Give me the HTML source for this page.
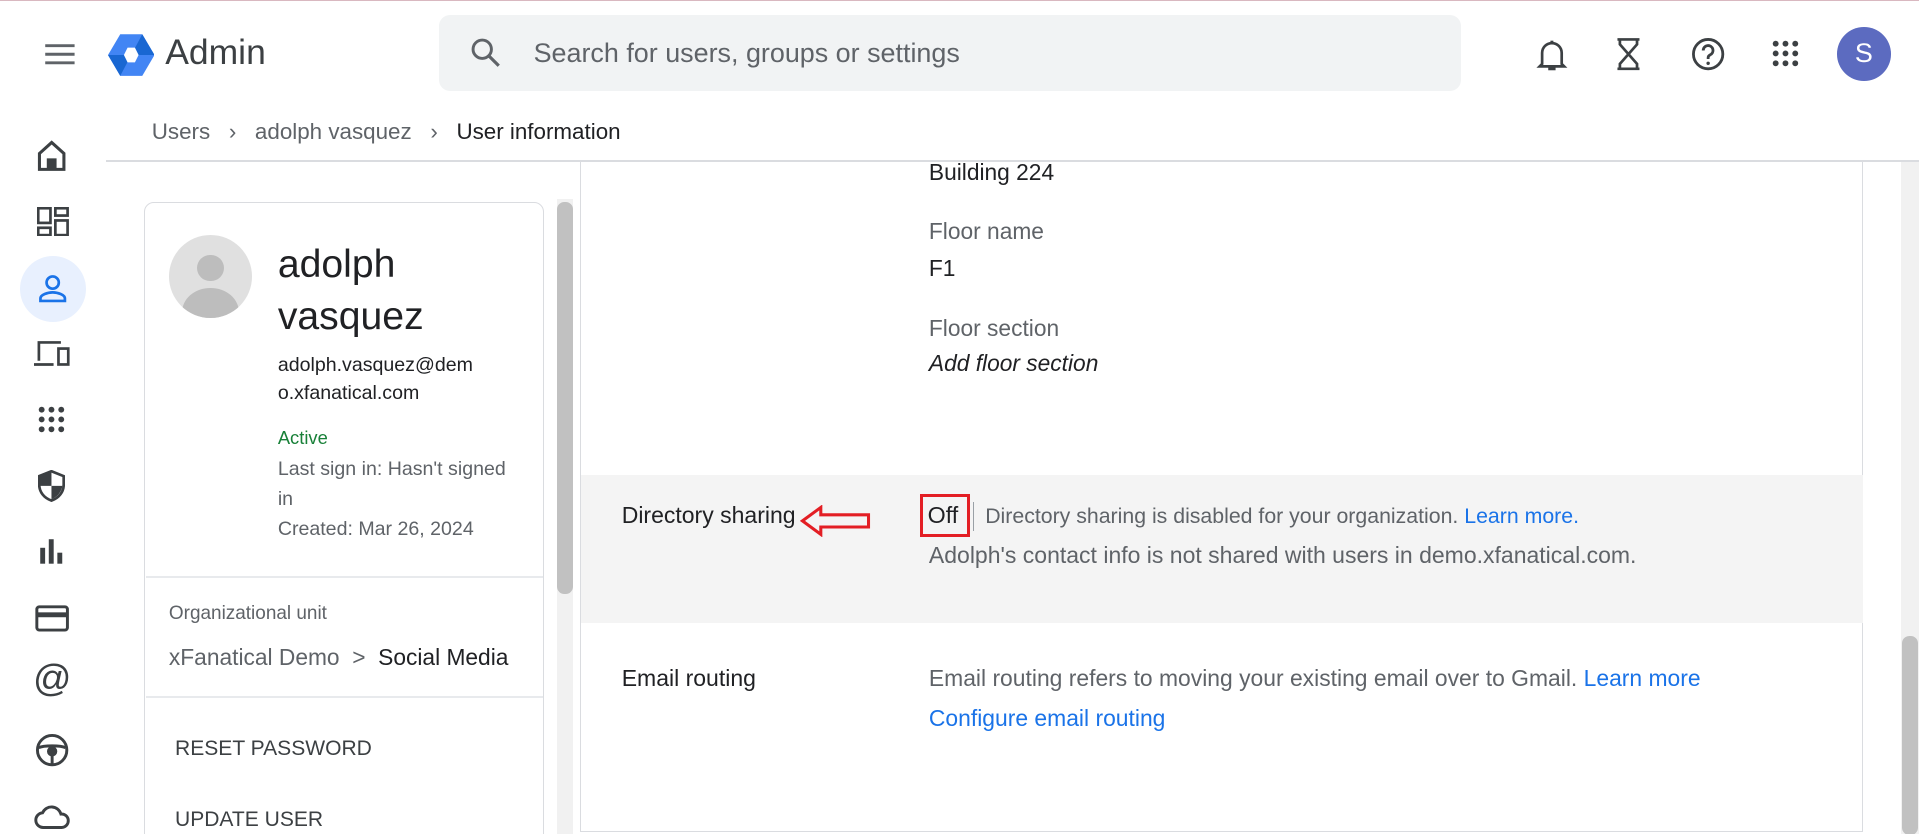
<!DOCTYPE html>
<html><head><style>
html,body{margin:0;padding:0;overflow:hidden;background:#fff}
body{width:1919px;height:834px}
#w{position:relative;width:1568px;height:682px;zoom:1.22385;font-family:"Liberation Sans",sans-serif;color:#202124}
.a{position:absolute;white-space:nowrap}
.g{color:#5f6368}
.b{color:#1a73e8}
svg{position:absolute}
</style></head><body><div id="w">
<div class="a" style="left:0;top:0;width:1568px;height:1px;background:#d9b8c0"></div>
<svg style="left:36px;top:34px" width="26" height="20" viewBox="0 0 26 20"><path d="M1 3h24M1 10h24M1 17h24" stroke="#5f6368" stroke-width="2.4"/></svg>
<svg style="left:88px;top:27px" width="38" height="36" viewBox="0 0 38 36"><path d="M10 1h18l10 17-10 17H10L0 18z" fill="#4285f4"/><path d="M19 18L28 1l10 17z" fill="#1967d2"/><path d="M19 18H0l10 17z" fill="#1967d2"/><path d="M13 18l3-6h6l3 6-3 6h-6z" fill="#fff"/></svg>
<div class="a" style="left:135px;top:26px;font-size:29px;color:#3c4043">Admin</div>
<div class="a" style="left:359px;top:12px;width:835px;height:62px;background:#f1f3f4;border-radius:9px"></div>
<svg style="left:384px;top:30px" width="26" height="26" viewBox="0 0 26 26"><circle cx="10" cy="10" r="7.5" fill="none" stroke="#5f6368" stroke-width="2.4"/><path d="M15.5 15.5l8 8" stroke="#5f6368" stroke-width="2.6"/></svg>
<div class="a g" style="left:436px;top:31px;font-size:22px">Search for users, groups or settings</div>
<svg style="left:1255px;top:30px" width="26" height="30" viewBox="0 0 26 30"><path d="M5 22V13a8 8 0 0 1 16 0v9l2 2H3z" fill="none" stroke="#3c4043" stroke-width="2.2"/><path d="M10 26h6" stroke="#3c4043" stroke-width="2.4"/><path d="M13 3v2" stroke="#3c4043" stroke-width="2.4"/></svg>
<svg style="left:1320px;top:30px" width="22" height="28" viewBox="0 0 22 28"><path d="M2 2h18M2 26h18M4 2v4l7 8-7 8v4M18 2v4l-7 8 7 8v4" fill="none" stroke="#3c4043" stroke-width="2.2"/></svg>
<svg style="left:1382px;top:30px" width="28" height="28" viewBox="0 0 28 28"><circle cx="14" cy="14" r="12" fill="none" stroke="#3c4043" stroke-width="2.3"/><path d="M10 11a4 4 0 1 1 5.5 3.7c-1 .5-1.5 1.2-1.5 2.3v1" fill="none" stroke="#3c4043" stroke-width="2.3"/><circle cx="14" cy="21.5" r="1.4" fill="#3c4043"/></svg>
<svg style="left:1448px;top:33px" width="22" height="22" viewBox="0 0 22 22" fill="#3c4043"><circle cx="3" cy="3" r="2.4"/><circle cx="11" cy="3" r="2.4"/><circle cx="19" cy="3" r="2.4"/><circle cx="3" cy="11" r="2.4"/><circle cx="11" cy="11" r="2.4"/><circle cx="19" cy="11" r="2.4"/><circle cx="3" cy="19" r="2.4"/><circle cx="11" cy="19" r="2.4"/><circle cx="19" cy="19" r="2.4"/></svg>
<div class="a" style="left:1501px;top:22px;width:44px;height:44px;border-radius:50%;background:#5c6bc0;color:#fff;font-size:22px;text-align:center;line-height:44px">S</div>
<div class="a g" style="left:124px;top:97px;font-size:18.3px">Users &nbsp;&nbsp;›&nbsp;&nbsp; adolph vasquez &nbsp;&nbsp;›&nbsp;&nbsp; <span style="color:#202124">User information</span></div>
<div class="a" style="left:87px;top:131px;width:1481px;height:1px;background:#dadce0"></div>
<svg style="left:30px;top:114px" width="24" height="26" viewBox="0 0 24 26"><path d="M2 11L12 2l10 9v13H2z" fill="none" stroke="#3c4043" stroke-width="2.5"/><rect x="8" y="15" width="8" height="9" fill="#3c4043"/></svg>
<svg style="left:30px;top:169px" width="26" height="24" viewBox="0 0 26 24" fill="none" stroke="#3c4043" stroke-width="2.2"><rect x="1" y="1" width="10" height="12"/><rect x="1" y="17" width="10" height="6"/><rect x="15" y="1" width="10" height="6"/><rect x="15" y="11" width="10" height="12"/></svg>
<div class="a" style="left:16px;top:209px;width:54px;height:54px;border-radius:50%;background:#e8f0fe"></div>
<svg style="left:31px;top:224px" width="24" height="24" viewBox="0 0 24 24" fill="none" stroke="#1a73e8" stroke-width="2.2"><circle cx="12" cy="7" r="5"/><path d="M2 22v-2c0-3 6-5 10-5s10 2 10 5v2z"/></svg>
<svg style="left:28px;top:278px" width="30" height="22" viewBox="0 0 30 22" fill="none" stroke="#3c4043" stroke-width="2.2"><path d="M4 17V2h18M0 20h16"/><rect x="20" y="7" width="8" height="13"/></svg>
<svg style="left:31px;top:332px" width="22" height="22" viewBox="0 0 22 22" fill="#3c4043"><circle cx="3" cy="3" r="2.4"/><circle cx="11" cy="3" r="2.4"/><circle cx="19" cy="3" r="2.4"/><circle cx="3" cy="11" r="2.4"/><circle cx="11" cy="11" r="2.4"/><circle cx="19" cy="11" r="2.4"/><circle cx="3" cy="19" r="2.4"/><circle cx="11" cy="19" r="2.4"/><circle cx="19" cy="19" r="2.4"/></svg>
<svg style="left:31px;top:384px" width="22" height="26" viewBox="0 0 22 26"><path d="M11 1L1 5v7c0 6 4 11 10 13 6-2 10-7 10-13V5z" fill="none" stroke="#3c4043" stroke-width="2.2"/><path d="M11 2v11H2v-1V5zM11 13h9c-1 5-4 9-9 11z" fill="#3c4043"/></svg>
<svg style="left:32px;top:440px" width="20" height="22" viewBox="0 0 20 22" fill="#3c4043"><rect x="1" y="8" width="4" height="13"/><rect x="8" y="1" width="4" height="20"/><rect x="15" y="12" width="4" height="9"/></svg>
<svg style="left:29px;top:494px" width="28" height="22" viewBox="0 0 28 22"><rect x="1.5" y="1.5" width="25" height="19" rx="2" fill="none" stroke="#3c4043" stroke-width="2.4"/><rect x="2" y="6" width="24" height="4" fill="#3c4043"/></svg>
<div class="a" style="left:27px;top:538px;font-size:31px;color:#3c4043">@</div>
<svg style="left:29px;top:599px" width="28" height="28" viewBox="0 0 28 28" fill="none" stroke="#3c4043" stroke-width="2.4"><circle cx="14" cy="14" r="12"/><path d="M3 12c4-2 18-2 22 0M14 17v9"/><circle cx="14" cy="15" r="3" fill="#3c4043"/></svg>
<svg style="left:28px;top:656px" width="30" height="22" viewBox="0 0 30 22"><path d="M8 20a6 6 0 0 1-1-12 8 8 0 0 1 15 1 5 5 0 0 1 1 11z" fill="none" stroke="#3c4043" stroke-width="2.4"/></svg>
<div class="a" style="left:118px;top:165px;width:325px;height:540px;border:1px solid #dadce0;border-radius:8px"></div>
<div class="a" style="left:138px;top:192px;width:68px;height:68px;border-radius:50%;background:#e0e0e0;overflow:hidden">
<div style="position:absolute;left:23px;top:16px;width:22px;height:22px;border-radius:50%;background:#bdbdbd"></div>
<div style="position:absolute;left:11px;top:43px;width:46px;height:40px;border-radius:50%;background:#bdbdbd"></div></div>
<div class="a" style="left:227px;top:195px;font-size:32px;line-height:43px">adolph<br>vasquez</div>
<div class="a" style="left:227px;top:287px;font-size:16px;line-height:23px">adolph.vasquez@dem<br>o.xfanatical.com</div>
<div class="a" style="left:227px;top:349px;font-size:15px;color:#188038">Active</div>
<div class="a g" style="left:227px;top:372px;font-size:16px;line-height:24.5px">Last sign in: Hasn't signed<br>in<br>Created: Mar 26, 2024</div>
<div class="a" style="left:119px;top:471px;width:325px;height:1px;background:#e8eaed"></div>
<div class="a g" style="left:138px;top:493px;font-size:15.5px">Organizational unit</div>
<div class="a g" style="left:138px;top:526px;font-size:18.6px">xFanatical Demo &nbsp;&gt;&nbsp; <span style="color:#202124">Social Media</span></div>
<div class="a" style="left:119px;top:569px;width:325px;height:1px;background:#e8eaed"></div>
<div class="a" style="left:143px;top:602px;font-size:17.2px;color:#3c4043">RESET PASSWORD</div>
<div class="a" style="left:143px;top:660px;font-size:17.2px;color:#3c4043">UPDATE USER</div>
<div class="a" style="left:455px;top:163px;width:13px;height:519px;background:#f1f1f1"></div>
<div class="a" style="left:455px;top:165px;width:13px;height:320px;background:#c1c1c1;border-radius:6px"></div>
<div class="a" style="left:474px;top:132px;width:1047px;height:547px;border:1px solid #dadce0;border-top:none"></div>
<div class="a" style="left:759px;top:130px;font-size:18.6px">Building 224</div>
<div class="a g" style="left:759px;top:178px;font-size:18.6px">Floor name</div>
<div class="a" style="left:759px;top:208px;font-size:18.6px">F1</div>
<div class="a g" style="left:759px;top:257px;font-size:18.6px">Floor section</div>
<div class="a" style="left:759px;top:286px;font-size:18.6px;font-style:italic">Add floor section</div>
<div class="a" style="left:475px;top:388px;width:1047px;height:121px;background:#f4f4f4"></div>
<div class="a" style="left:508px;top:410px;font-size:18.8px">Directory sharing</div>
<svg style="left:654px;top:413px" width="58" height="26" viewBox="0 0 58 26"><path d="M2 13L17 2v6h39v10H17v6z" fill="none" stroke="#e31e24" stroke-width="2.5"/></svg>
<div class="a" style="left:752px;top:404px;width:36px;height:30px;border:2.5px solid #e31e24"></div>
<div class="a" style="left:758px;top:410px;font-size:19px">Off</div>
<div class="a" style="left:795px;top:410px;width:1px;height:24px;background:#9aa0a6"></div>
<div class="a g" style="left:805px;top:412px;font-size:17.4px">Directory sharing is disabled for your organization. <span class="b">Learn more.</span></div>
<div class="a g" style="left:759px;top:443px;font-size:18.8px">Adolph's contact info is not shared with users in demo.xfanatical.com.</div>
<div class="a" style="left:508px;top:543px;font-size:18.8px">Email routing</div>
<div class="a g" style="left:759px;top:543px;font-size:18.7px">Email routing refers to moving your existing email over to Gmail. <span class="b">Learn more</span></div>
<div class="a b" style="left:759px;top:576px;font-size:18.7px">Configure email routing</div>
<div class="a" style="left:1553px;top:132px;width:15px;height:550px;background:#f1f1f1"></div>
<div class="a" style="left:1554px;top:520px;width:13px;height:162px;background:#c1c1c1;border-radius:6px"></div>
</div></body></html>
